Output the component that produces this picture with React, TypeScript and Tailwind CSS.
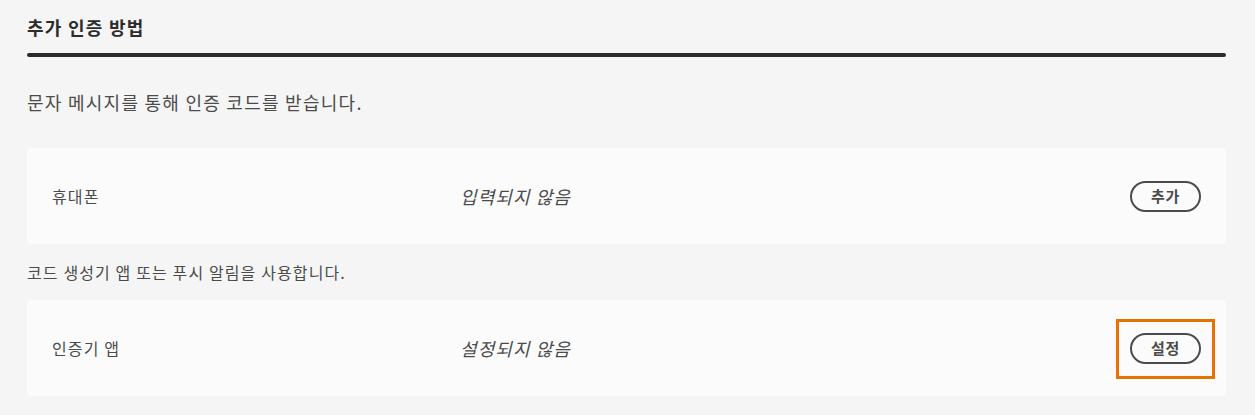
const font = { fontFamily: '"Noto Sans CJK KR", "Noto Sans", sans-serif' };

interface MethodRowProps {
  label: string;
  value: string;
  action: string;
  focused?: boolean;
}

const MethodRow = ({ label, value, action, focused }: MethodRowProps) => (
  <div className="flex h-[96px] items-center rounded-[4px] bg-[#fbfbfb] pl-[25px] pr-[25px]">
    <div className="w-[408px] shrink-0 text-[16px] tracking-[0.07em] text-[#4b4b4b]">{label}</div>
    <div className="flex-1 text-[18px] italic tracking-[0.06em] text-[#4b4b4b]">{value}</div>
    <div className="relative">
      <button className="flex h-[31px] w-[71px] items-center justify-center rounded-full border-2 border-[#4b4b4b] text-[15px] font-bold tracking-[0.05em] text-[#4b4b4b]">
        {action}
      </button>
      {focused && (
        <span className="pointer-events-none absolute -top-[14px] -bottom-[15px] -left-[14px] -right-[14px] border-[3px] border-[#e67300]" />
      )}
    </div>
  </div>
);

const App = () => {
  return (
    <div className="min-h-screen bg-[#f5f5f5] px-[27px] pr-[29px] pt-[14px]" style={font}>
      <h2 className="text-[18px] font-bold leading-[26px] tracking-[0.07em] text-[#2c2c2c]">추가 인증 방법</h2>
      <div className="mt-[13px] h-[4px] rounded-full bg-[#2c2c2c]" />

      <p className="mt-[33px] text-[18px] leading-[24px] tracking-[0.07em] text-[#4b4b4b]">
        문자 메시지를 통해 인증 코드를 받습니다.
      </p>

      <div className="mt-[34px]">
        <MethodRow label="휴대폰" value="입력되지 않음" action="추가" />
      </div>

      <p className="mt-[18px] text-[16px] leading-[20px] tracking-[0.07em] text-[#4b4b4b]">
        코드 생성기 앱 또는 푸시 알림을 사용합니다.
      </p>

      <div className="mt-[18px]">
        <MethodRow label="인증기 앱" value="설정되지 않음" action="설정" focused />
      </div>
    </div>
  );
};

export default App;
